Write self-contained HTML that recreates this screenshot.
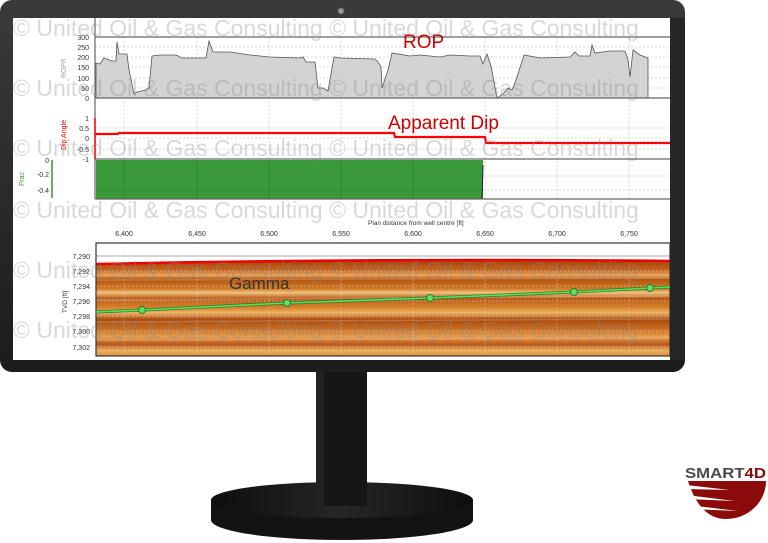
<!DOCTYPE html>
<html><head><meta charset="utf-8"><style>
html,body{margin:0;padding:0;background:#fff;width:768px;height:543px;overflow:hidden}
svg{display:block}
text{font-family:"Liberation Sans",sans-serif}
</style></head><body>
<svg width="768" height="543" viewBox="0 0 768 543" xmlns="http://www.w3.org/2000/svg">
<defs>
<linearGradient id="fr" x1="0" y1="0" x2="0" y2="1"><stop offset="0" stop-color="#3a3a3a"/><stop offset="1" stop-color="#1c1c1c"/></linearGradient>
<linearGradient id="base" x1="0" y1="0" x2="1" y2="0"><stop offset="0" stop-color="#0e0e0e"/><stop offset="0.5" stop-color="#262626"/><stop offset="1" stop-color="#0e0e0e"/></linearGradient>
<linearGradient id="gam" x1="0" y1="0" x2="0" y2="1">
<stop offset="0" stop-color="#a2420c"/><stop offset="0.1" stop-color="#c4621c"/><stop offset="0.16" stop-color="#eaa860"/><stop offset="0.2" stop-color="#b5540f"/><stop offset="0.3" stop-color="#d07a28"/><stop offset="0.34" stop-color="#f0c480"/><stop offset="0.4" stop-color="#b85a18"/><stop offset="0.5" stop-color="#d9852f"/><stop offset="0.55" stop-color="#edb466"/><stop offset="0.62" stop-color="#a84a0c"/><stop offset="0.72" stop-color="#c96e22"/><stop offset="0.8" stop-color="#e8a050"/><stop offset="0.88" stop-color="#b5561a"/><stop offset="0.94" stop-color="#eab060"/><stop offset="1" stop-color="#e0923e"/></linearGradient>
</defs>
<!-- stand -->
<path d="M211 500 L211 520 A131 20 0 0 0 473 520 L473 500 Z" fill="#131313"/>
<ellipse cx="342" cy="500" rx="131" ry="18" fill="url(#base)"/>
<rect x="316" y="368" width="51" height="138" fill="#161616"/>
<rect x="316" y="368" width="8" height="138" fill="#222"/>
<!-- frame -->
<rect x="0" y="0" width="685" height="372" rx="12" fill="url(#fr)"/>
<circle cx="341" cy="11" r="3" fill="#999" stroke="#666"/>
<rect x="13" y="18" width="657" height="342" fill="#fff"/>
<!-- panels -->
<g stroke="#ccc" stroke-dasharray="2,2" stroke-width="0.8">
<line x1="124" y1="37" x2="124" y2="199"/><line x1="197" y1="37" x2="197" y2="199"/><line x1="269" y1="37" x2="269" y2="199"/><line x1="341" y1="37" x2="341" y2="199"/><line x1="413" y1="37" x2="413" y2="199"/><line x1="485" y1="37" x2="485" y2="199"/><line x1="557" y1="37" x2="557" y2="199"/><line x1="629" y1="37" x2="629" y2="199"/>
<line x1="95" y1="47" x2="670" y2="47"/><line x1="95" y1="57" x2="670" y2="57"/><line x1="95" y1="67" x2="670" y2="67"/><line x1="95" y1="78" x2="670" y2="78"/><line x1="95" y1="88" x2="670" y2="88"/>
<line x1="95" y1="128" x2="670" y2="128"/><line x1="95" y1="138" x2="670" y2="138"/><line x1="95" y1="149" x2="670" y2="149"/>
<line x1="95" y1="176" x2="670" y2="176"/><line x1="95" y1="190" x2="670" y2="190"/>
</g>
<path d="M96 98 L96 63 L100 64 L104 58 L112 61 L116 61 L117 42 L119 54 L127 54 L129 70 L134 94 L137 92 L146 90 L149 88 L152 56 L160 55 L176 55 L182 58 L203 58 L206 58 L209 41 L213 52 L230 52 L250 55 L270 57 L300 58 L303 57 L306 62 L315 62 L318 88 L323 88 L328 91 L334 57 L340 58 L375 59 L378 62 L381 67 L382 88 L388 70 L392 53 L410 56 L420 55 L440 57 L450 55 L470 56 L480 56 L483 64 L487 54 L491 66 L497 98 L503 94 L508 88 L512 90 L516 80 L524 55 L540 58 L570 57 L575 52 L579 56 L590 56 L592 45 L595 53 L610 51 L625 51 L628 60 L630 77 L633 50 L640 55 L648 58 L648 98 Z" fill="#d3d3d3" stroke="#555" stroke-width="0.8"/>
<rect x="96" y="160" width="387" height="39" fill="#3a9a3a"/>
<g stroke="#2d7d2d" stroke-width="0.6"><line x1="124" y1="160" x2="124" y2="199"/><line x1="197" y1="160" x2="197" y2="199"/><line x1="269" y1="160" x2="269" y2="199"/><line x1="341" y1="160" x2="341" y2="199"/><line x1="413" y1="160" x2="413" y2="199"/><line x1="96" y1="176" x2="483" y2="176"/><line x1="96" y1="190" x2="483" y2="190"/></g>
<line x1="483" y1="165" x2="482" y2="199" stroke="#222"/>
<g stroke="#666" stroke-width="1.2" fill="none">
<line x1="95" y1="37" x2="670" y2="37"/><line x1="95" y1="98" x2="670" y2="98"/><line x1="95" y1="159" x2="670" y2="159"/><line x1="95" y1="199" x2="670" y2="199"/>
<line x1="95" y1="18" x2="95" y2="199"/>
</g>
<path d="M95 134 L118 134 L119 133 L394 133 L395 137 L485 137 L486 143 L670 143" stroke="#f00" stroke-width="2.2" fill="none"/>
<line x1="95" y1="118" x2="95" y2="159" stroke="#f00" stroke-width="1.5"/>
<line x1="52" y1="160" x2="52" y2="198" stroke="#2a9a2a" stroke-width="1.5"/>
<g font-size="7" fill="#333" text-anchor="end">
<text x="89" y="40">300</text><text x="89" y="50">250</text><text x="89" y="60">200</text><text x="89" y="70">150</text><text x="89" y="81">100</text><text x="89" y="91">50</text><text x="89" y="101">0</text>
<text x="89" y="121">1</text><text x="89" y="131">0.5</text><text x="89" y="141">0</text><text x="89" y="152">-0.5</text><text x="89" y="162">-1</text>
<text x="49" y="163">0</text><text x="49" y="177">-0.2</text><text x="49" y="193">-0.4</text>
</g>
<text x="0" y="0" font-size="7" fill="#999" transform="translate(66,78) rotate(-90)">ROP/t</text>
<text x="0" y="0" font-size="7" fill="#e00" transform="translate(66,150) rotate(-90)">Dip Angle</text>
<text x="0" y="0" font-size="7" fill="#2a9a2a" transform="translate(24,186) rotate(-90)">Frac</text>
<text x="403" y="48" font-size="19" fill="#c00">ROP</text>
<text x="388" y="129" font-size="19" fill="#c00">Apparent Dip</text>
<text x="368" y="225" font-size="6.5" fill="#333">Plan distance from well centre [ft]</text>
<g font-size="7" fill="#333" text-anchor="middle">
<text x="124" y="236">6,400</text><text x="197" y="236">6,450</text><text x="269" y="236">6,500</text><text x="341" y="236">6,550</text><text x="413" y="236">6,600</text><text x="485" y="236">6,650</text><text x="557" y="236">6,700</text><text x="629" y="236">6,750</text>
</g>
<!-- gamma -->
<path d="M96 264 Q380 258 670 261 L670 356 L96 356 Z" fill="url(#gam)"/>
<g stroke="#fff" stroke-opacity="0.2" stroke-width="1.5"><line x1="96" y1="280" x2="670" y2="278"/><line x1="96" y1="300" x2="670" y2="296"/><line x1="96" y1="322" x2="670" y2="319"/><line x1="96" y1="340" x2="670" y2="338"/></g>
<g stroke="#ddd" stroke-dasharray="2,2" stroke-width="0.7" stroke-opacity="0.6">
<line x1="124" y1="243" x2="124" y2="356"/><line x1="197" y1="243" x2="197" y2="356"/><line x1="269" y1="243" x2="269" y2="356"/><line x1="341" y1="243" x2="341" y2="356"/><line x1="413" y1="243" x2="413" y2="356"/><line x1="485" y1="243" x2="485" y2="356"/><line x1="557" y1="243" x2="557" y2="356"/><line x1="629" y1="243" x2="629" y2="356"/>
<line x1="96" y1="271" x2="670" y2="271"/><line x1="96" y1="286" x2="670" y2="286"/><line x1="96" y1="301" x2="670" y2="301"/><line x1="96" y1="316" x2="670" y2="316"/><line x1="96" y1="331" x2="670" y2="331"/><line x1="96" y1="347" x2="670" y2="347"/>
</g>
<line x1="96" y1="256" x2="670" y2="256" stroke="#aaa"/>
<path d="M96 264 Q380 258 670 261" stroke="#e00" stroke-width="2.5" fill="none"/>
<rect x="96" y="243" width="574" height="113" fill="none" stroke="#333" stroke-width="1.2"/>
<path d="M96 312 L142 310 L287 303 L430 298 L574 292 L670 287" stroke="#2a7a2a" stroke-width="3" fill="none"/>
<path d="M96 312 L142 310 L287 303 L430 298 L574 292 L670 287" stroke="#5ee05e" stroke-width="1.6" fill="none"/>
<g fill="#5ee05e" stroke="#2a7a2a"><circle cx="142" cy="310" r="3.5"/><circle cx="287" cy="303" r="3.5"/><circle cx="430" cy="298" r="3.5"/><circle cx="574" cy="292" r="3.5"/><circle cx="650" cy="288" r="3.5"/></g>
<text x="229" y="289" font-size="17" fill="#333">Gamma</text>
<g font-size="7" fill="#333" text-anchor="end">
<text x="90" y="259">7,290</text><text x="90" y="274">7,292</text><text x="90" y="289">7,294</text><text x="90" y="304">7,296</text><text x="90" y="319">7,298</text><text x="90" y="334">7,300</text><text x="90" y="350">7,302</text>
</g>
<text x="0" y="0" font-size="6.5" fill="#333" transform="translate(67,313) rotate(-90)">TVD [ft]</text>
<!-- watermark -->
<g font-size="23" fill="#888" fill-opacity="0.33">
<text x="13" y="36">© United Oil &amp; Gas Consulting © United Oil &amp; Gas Consulting</text>
<text x="13" y="96">© United Oil &amp; Gas Consulting © United Oil &amp; Gas Consulting</text>
<text x="13" y="156">© United Oil &amp; Gas Consulting © United Oil &amp; Gas Consulting</text>
<text x="13" y="218">© United Oil &amp; Gas Consulting © United Oil &amp; Gas Consulting</text>
<text x="13" y="278">© United Oil &amp; Gas Consulting © United Oil &amp; Gas Consulting</text>
<text x="13" y="338">© United Oil &amp; Gas Consulting © United Oil &amp; Gas Consulting</text>
</g>
<rect x="670" y="18" width="15" height="342" fill="#262626"/>
<!-- logo -->
<text x="685" y="478" font-size="15" font-weight="bold" fill="#4a4a4a" textLength="81" lengthAdjust="spacingAndGlyphs">SMART<tspan fill="#8b0a0a">4D</tspan></text>
<path d="M688 481 L766 481 A40 38 0 0 1 726 519 Q700 519 688 481 Z" fill="#8b0a0a"/>
<g fill="#fff">
<path d="M686 485 L730 490 L686 489 Z"/>
<path d="M686 495 L735 501 L686 499 Z"/>
<path d="M688 505 L738 511 L690 509 Z"/>
</g>
</svg>
</body></html>
